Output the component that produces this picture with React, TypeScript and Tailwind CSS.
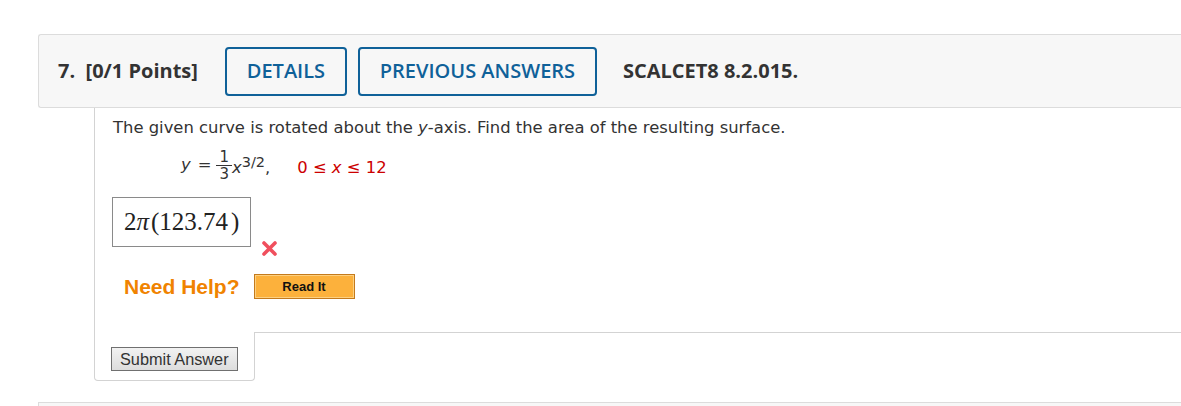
import React from 'react';

const WrongMark: React.FC = () => (
  <svg width="17" height="17" viewBox="0 0 17 17" className="block">
    <path d="M3 3 L14 14 M14 3 L3 14" stroke="#f04f5d" strokeWidth="3.6" strokeLinecap="round" />
  </svg>
);

const App: React.FC = () => {
  return (
    <div className="w-[1181px] h-[406px] overflow-hidden bg-white pt-[34px] pl-[38px]">
      {/* question header */}
      <div className="h-[74px] border border-r-0 border-[#dcdcdc] bg-[#f7f7f7] rounded-l-[3px] flex items-center pl-[19px] font-['Open_Sans',sans-serif]">
        <span className="text-[20px] font-bold text-[#333]">7.&nbsp; [0/1 Points]</span>
        <button className="ml-[27px] h-[49px] w-[122px] border-2 border-[#0f6199] rounded-[4px] text-[20px] font-semibold text-[#0f6199]">
          DETAILS
        </button>
        <button className="ml-[11px] h-[49px] w-[239px] border-2 border-[#0f6199] rounded-[4px] text-[20px] font-semibold text-[#0f6199]">
          PREVIOUS ANSWERS
        </button>
        <span className="ml-[26px] text-[20px] font-bold text-[#333]">SCALCET8 8.2.015.</span>
      </div>

      {/* question body */}
      <div className="ml-[56px] flex flex-col">
        <div className="border-l border-[#d3d3d3] pl-[18px] pt-[9px] pb-[33px] font-['DejaVu_Sans',Verdana,sans-serif] text-[#333]">
          <p className="text-[16.4px] leading-[21px]">
            The given curve is rotated about the <i>y</i>-axis. Find the area of the resulting surface.
          </p>
          <div className="mt-[11px] h-[33px] pl-[68px] flex items-center text-[16.4px]">
            <i>y</i>
            <span className="ml-[7px]">=</span>
            <span className="ml-[5px] inline-flex flex-col items-center text-[15px] leading-[14px]">
              <span className="border-b border-[#333] px-[3px] pb-[1px]">1</span>
              <span className="pt-[1px]">3</span>
            </span>
            <i className="mt-[6px]">x</i>
            <span className="text-[14.5px] -mt-[6px]">3/2</span>
            <span className="mt-[6px]">,</span>
            <span className="ml-[27px] mt-[6px] text-[#cc0000]">0 ≤ <i>x</i> ≤ 12</span>
          </div>

          <div className="mt-[15px] flex items-start -ml-[1px]">
            <div className="w-[139px] h-[50px] border border-[#8a8a8a] flex items-center pl-[11px] font-['Liberation_Serif',serif] text-[25px] text-[#222]">
              2<i>π</i><span className="ml-[2px]">(</span>123.74<span className="ml-[3px]">)</span>
            </div>
            <div className="ml-[10px] mt-[43px]">
              <WrongMark />
            </div>
          </div>

          <div className="mt-[17px] flex items-center">
            <span className="ml-[11px] font-['Liberation_Sans',Arial,sans-serif] font-bold text-[21px] text-[#f08300] leading-[25px]">
              Need Help?
            </span>
            <button className="ml-[14px] w-[101px] h-[25px] border border-[#c47a1c] bg-[#fcb13c] shadow-[inset_0_0_0_1px_#fdd080] font-['Liberation_Sans',Arial,sans-serif] font-bold text-[13px] text-[#111]">
              Read It
            </button>
          </div>
        </div>

        <div className="flex">
          <div className="w-[161px] h-[49px] border border-t-0 border-[#d3d3d3] rounded-b-[4px] pl-[16px] pt-[15px]">
            <button className="h-[24px] px-[8px] border border-[#707070] bg-gradient-to-b from-[#f2f2f2] to-[#dddddd] font-['Liberation_Sans',Arial,sans-serif] text-[16.3px] leading-[20px] text-[#333]">
              Submit Answer
            </button>
          </div>
          <div className="flex-1 border-t border-[#d3d3d3]" />
        </div>
      </div>

      {/* next question header */}
      <div className="mt-[21px] h-[20px] border-t border-l border-[#dcdcdc] bg-[#f7f7f7]" />
    </div>
  );
};

export default App;
